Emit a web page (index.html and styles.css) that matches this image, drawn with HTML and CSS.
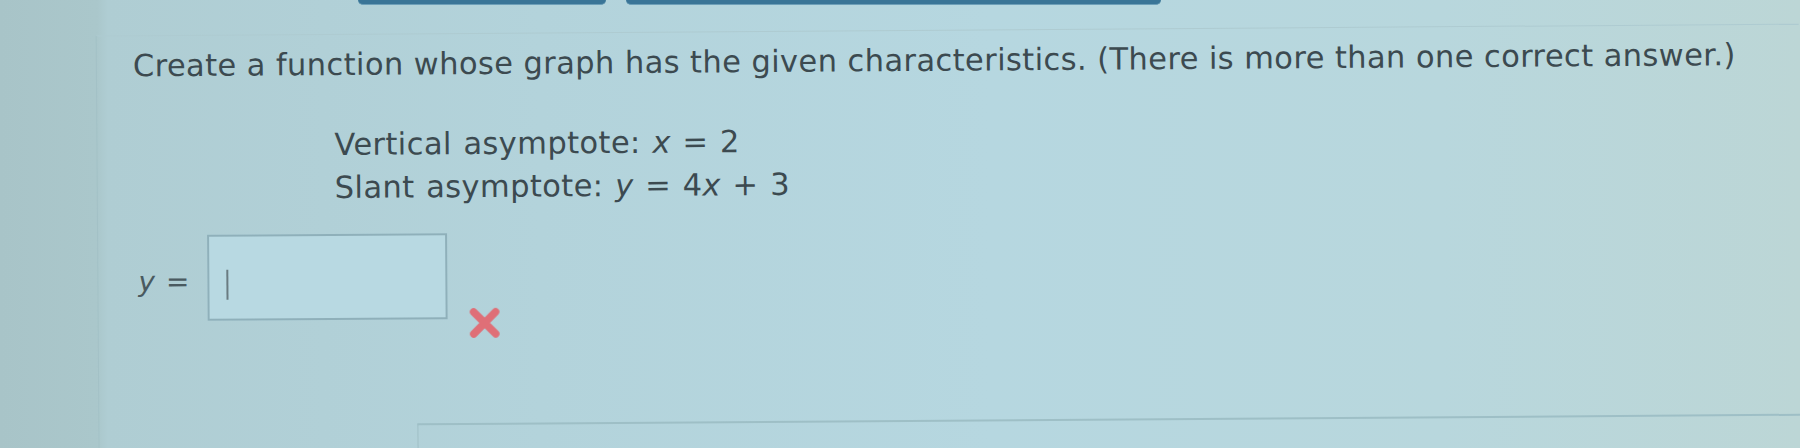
FILE: index.html
```html
<!DOCTYPE html>
<html>
<head>
<meta charset="utf-8">
<link rel="stylesheet" href="styles.css">
</head>
<body>
<div class="screen">
  <div class="tabs">
    <div class="tab tab-a"></div>
    <div class="tab tab-b"></div>
  </div>
  <div class="tilt">
    <div class="panel">
      <p class="title">Create a function whose graph has the given characteristics. (There is more than one correct answer.)</p>
      <div class="given">
        <div class="line">Vertical asymptote: <i>x</i> = 2</div>
        <div class="line">Slant asymptote: <i>y</i> = 4<i>x</i> + 3</div>
      </div>
      <div class="answer">
        <span class="label"><i>y</i> =</span>
        <div class="box"><span class="caret"></span></div>
        <svg class="mark" width="36" height="36" viewBox="0 0 36 36">
          <path d="M7 7 L29 29 M29 7 L7 29" stroke="#df6f77" stroke-width="7.5" stroke-linecap="round" fill="none"/>
        </svg>
      </div>
      <div class="next"></div>
    </div>
  </div>
</div>
</body>
</html>
```
FILE: styles.css
```css
html, body {
  margin: 0;
  padding: 0;
}
body {
  width: 1800px;
  height: 448px;
  overflow: hidden;
  font-family: "DejaVu Sans", "Liberation Sans", sans-serif;
  color: #3c4a50;
}
.screen {
  width: 1800px;
  height: 448px;
  background: linear-gradient(90deg, #a8c4c8 0%, #aac7cb 5.4%, #afcdd3 6%, #b3d3db 30%, #b6d7e0 55%, #b8d7dd 80%, #bcd6d6 100%);
  display: flex;
  flex-direction: column;
  overflow: hidden;
}
.tabs {
  display: flex;
  gap: 20px;
  padding-left: 358px;
  height: 5px;
  flex: none;
}
.tab {
  height: 4px;
  background: #3a7597;
  border-bottom: 1px solid #6d9fb8;
  border-radius: 0 0 5px 5px;
}
.tab-a { width: 248px; }
.tab-b { width: 535px; }
.tilt {
  flex: 1;
  display: flex;
  flex-direction: column;
  transform: rotate(-0.4deg);
  transform-origin: 900px 219px;
}
.panel {
  margin-left: 97px;
  margin-top: 25px;
  border-left: 1px solid #a3c1c6;
  border-top: 1px solid #aecbd1;
  flex: 1;
  display: flex;
  flex-direction: column;
  padding-left: 36px;
  position: relative;
}
.title {
  margin: 12px 0 0 0;
  font-size: 30.5px;
  line-height: 36px;
  letter-spacing: 0.4px;
  white-space: nowrap;
}
.given {
  margin-top: 40px;
  padding-left: 201px;
  font-size: 30.5px;
  line-height: 43px;
  letter-spacing: 0.4px;
  word-spacing: 1.5px;
}
.given i, .label i {
  font-style: oblique;
}
.answer {
  display: flex;
  align-items: flex-start;
  margin-top: 25px;
}
.label {
  font-size: 28px;
  line-height: 36px;
  margin-top: 29px;
  width: 73px;
  padding-left: 4px;
  box-sizing: border-box;
  word-spacing: 2px;
  color: #4a5a60;
}
.box {
  width: 240px;
  height: 86px;
  border: 2px solid #8fb0ba;
  background: #b8d9e2;
  box-sizing: border-box;
  padding: 33px 0 0 17px;
}
.caret {
  display: block;
  width: 2px;
  height: 30px;
  background: #6a7c82;
}
.mark {
  margin-top: 72px;
  margin-left: 19px;
  filter: blur(0.5px);
}
.next {
  position: absolute;
  left: 318px;
  top: 389px;
  right: -20px;
  height: 60px;
  border-left: 1px solid #9fc0c6;
  border-top: 2px solid #9ebfc6;
}
```
